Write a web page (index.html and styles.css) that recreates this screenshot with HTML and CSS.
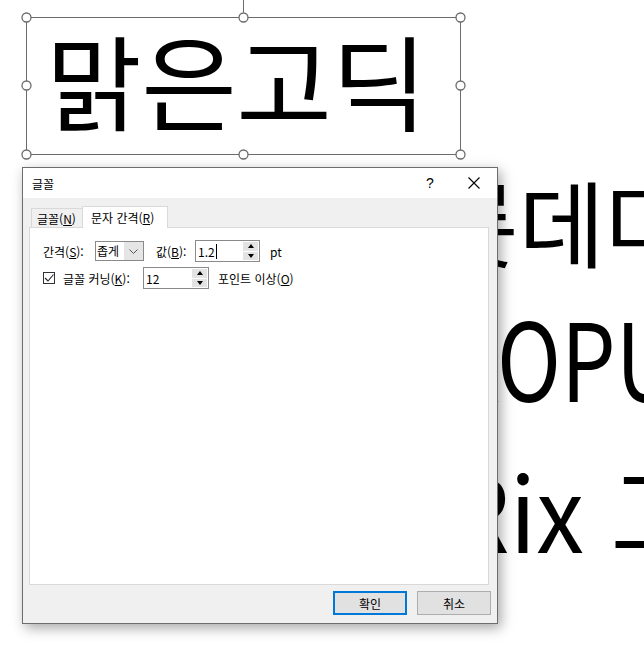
FILE: index.html
```html
<!DOCTYPE html>
<html lang="ko">
<head>
<meta charset="utf-8">
<link rel="stylesheet" href="styles.css">
</head>
<body>
<div class="stage">
  <svg class="selection" width="644" height="170" viewBox="0 0 644 170">
    <line x1="243.5" y1="0" x2="243.5" y2="12.5" stroke="#6b6b6b" stroke-width="1"/>
    <rect x="26.5" y="17.5" width="434" height="137" fill="none" stroke="#6b6b6b" stroke-width="1"/>
    <g fill="#fff" stroke="#6b6b6b" stroke-width="1.3">
      <circle cx="26.5" cy="17.5" r="4.5"/>
      <circle cx="243.5" cy="17.5" r="4.5"/>
      <circle cx="460.5" cy="17.5" r="4.5"/>
      <circle cx="26.5" cy="85.5" r="4.5"/>
      <circle cx="460.5" cy="85.5" r="4.5"/>
      <circle cx="26.5" cy="154.5" r="4.5"/>
      <circle cx="243.5" cy="154.5" r="4.5"/>
      <circle cx="460.5" cy="154.5" r="4.5"/>
    </g>
  </svg>
  <div class="slide-text t-main">맑은고딕</div>
  <div class="slide-text t1">롯데마트</div>
  <div class="slide-text t2">KOPUB</div>
  <div class="slide-text t3">Rix 고딕</div>

  <div class="dialog">
    <div class="titlebar">
      <span class="title">글꼴</span>
      <span class="help">?</span>
      <span class="close">
        <svg width="12" height="12" viewBox="0 0 12 12"><path d="M0.5 0.5 L11.5 11.5 M11.5 0.5 L0.5 11.5" stroke="#000" stroke-width="1.1" fill="none"/></svg>
      </span>
    </div>
    <div class="body">
      <div class="tabs">
        <div class="tab">글꼴(<u>N</u>)</div>
        <div class="tab active">문자 간격(<u>R</u>)</div>
      </div>
      <div class="panel">
        <div class="row">
          <span class="lbl lbl-s">간격(<u>S</u>):</span>
          <div class="combo">
            <span class="combo-text">좁게</span>
            <span class="combo-btn">
              <svg width="9" height="5" viewBox="0 0 9 5"><path d="M0.5 0.5 L4.5 4.5 L8.5 0.5" stroke="#555" stroke-width="1" fill="none"/></svg>
            </span>
          </div>
          <span class="lbl lbl-b">값(<u>B</u>):</span>
          <div class="spin spin-b">
            <span class="spin-val">1.2<span class="caret"></span></span>
            <span class="spin-btns"><span class="sb"><i class="tri-up"></i></span><span class="sb"><i class="tri-down"></i></span></span>
          </div>
          <span class="unit">pt</span>
        </div>
        <div class="row row2">
          <span class="chk">
            <svg width="10" height="10" viewBox="0 0 10 10"><path d="M1 5 L4 8 L9.5 1.5" stroke="#222" stroke-width="1.1" fill="none"/></svg>
          </span>
          <span class="lbl lbl-k">글꼴 커닝(<u>K</u>):</span>
          <div class="spin spin-k">
            <span class="spin-val">12</span>
            <span class="spin-btns"><span class="sb"><i class="tri-up"></i></span><span class="sb"><i class="tri-down"></i></span></span>
          </div>
          <span class="unit unit-o">포인트 이상(<u>O</u>)</span>
        </div>
      </div>
      <div class="buttons">
        <button class="btn btn-default">확인</button>
        <button class="btn">취소</button>
      </div>
    </div>
  </div>
</div>
</body>
</html>
```

FILE: styles.css
```css
html, body {
  margin: 0;
  padding: 0;
}
body {
  width: 644px;
  height: 649px;
  overflow: hidden;
  background: #fff;
  font-family: "Noto Sans CJK KR", "Noto Sans", sans-serif;
  color: #000;
}
.stage {
  position: relative;
  width: 644px;
  height: 649px;
  overflow: hidden;
}
.selection {
  position: absolute;
  left: 0;
  top: 0;
}
.slide-text {
  position: absolute;
  white-space: nowrap;
  line-height: 1;
  color: #000;
}
.t-main {
  left: 46px;
  top: 27px;
  font-size: 104px;
  letter-spacing: -0.5px;
}
.t1 {
  left: 432px;
  top: 173px;
  font-size: 94px;
}
.t2 {
  left: 443px;
  top: 301px;
  font-size: 108px;
  transform: scaleX(0.8);
  transform-origin: left top;
}
.t3 {
  left: 449px;
  top: 457px;
  font-size: 103px;
  transform: scaleX(0.93);
  transform-origin: left top;
}

/* dialog window */
.dialog {
  position: absolute;
  left: 22px;
  top: 167px;
  width: 474px;
  height: 455px;
  border: 1px solid #6d6d6d;
  background: #f0f0f0;
  box-shadow: 3px 4px 12px rgba(0, 0, 0, 0.35);
  display: flex;
  flex-direction: column;
  font-size: 12px;
}
.titlebar {
  height: 30px;
  background: #fff;
  display: flex;
  align-items: center;
  padding-left: 9px;
}
.title {
  flex: 1;
}
.help {
  width: 30px;
  text-align: center;
  font-size: 14px;
  font-family: "Liberation Sans", sans-serif;
  padding-right: 4px;
}
.close {
  width: 46px;
  margin-left: 2px;
  display: flex;
  justify-content: center;
  align-items: center;
}
.body {
  flex: 1;
  display: flex;
  flex-direction: column;
  padding: 8px 6px 8px 6px;
}
.tabs {
  height: 21px;
  display: flex;
  align-items: flex-end;
  margin-left: 2px;
  position: relative;
  z-index: 1;
}
.tab {
  box-sizing: border-box;
  height: 19px;
  width: 52px;
  border: 1px solid #d9d9d9;
  border-bottom: none;
  padding: 1px 0 0 5px;
  display: flex;
  align-items: center;
  background: #f0f0f0;
}
.tab.active {
  height: 22px;
  width: 86px;
  margin-left: -1px;
  margin-bottom: -1px;
  padding: 0 0 1px 8px;
  background: #fff;
}
.panel {
  box-sizing: border-box;
  height: 358px;
  margin-right: 2px;
  background: #fff;
  border: 1px solid #d9d9d9;
  padding: 12px 13px;
}
.row {
  display: flex;
  align-items: center;
  height: 22px;
}
.row2 {
  margin-top: 5px;
}
.lbl-s {
  width: 52px;
}
.combo {
  box-sizing: border-box;
  width: 49px;
  height: 20px;
  border: 1px solid #8a8a8a;
  display: flex;
}
.combo-text {
  flex: 1;
  background: #fff;
  padding-left: 1px;
  line-height: 18px;
}
.combo-btn {
  width: 19px;
  background: #e5e5e5;
  display: flex;
  align-items: center;
  justify-content: center;
}
.lbl-b {
  margin-left: 12px;
  width: 39px;
}
.spin {
  box-sizing: border-box;
  height: 22px;
  border: 1px solid #8a8a8a;
  background: #fff;
  display: flex;
  align-items: center;
}
.spin-b {
  width: 65px;
}
.spin-k {
  width: 66px;
}
.spin-val {
  flex: 1;
  padding-left: 2px;
  display: flex;
  align-items: center;
}
.caret {
  display: inline-block;
  width: 1px;
  height: 15px;
  background: #000;
  margin-left: 1px;
}
.spin-btns {
  width: 15px;
  height: 18px;
  margin-right: 1px;
  display: flex;
  flex-direction: column;
  gap: 1px;
}
.sb {
  flex: 1;
  background: #e3e3e3;
  display: flex;
  align-items: center;
  justify-content: center;
}
.tri-up {
  width: 0;
  height: 0;
  border-left: 3.5px solid transparent;
  border-right: 3.5px solid transparent;
  border-bottom: 4px solid #000;
}
.tri-down {
  width: 0;
  height: 0;
  border-left: 3.5px solid transparent;
  border-right: 3.5px solid transparent;
  border-top: 4px solid #000;
}
.unit {
  margin-left: 10px;
}
.chk {
  box-sizing: border-box;
  width: 12px;
  height: 12px;
  border: 1px solid #333;
  display: flex;
  align-items: center;
  justify-content: center;
}
.lbl-k {
  margin-left: 8px;
  width: 80px;
}
.unit-o {
  margin-left: 9px;
}
.buttons {
  margin-top: 6px;
  display: flex;
  justify-content: flex-end;
  gap: 10px;
}
.btn {
  box-sizing: border-box;
  width: 74px;
  height: 24px;
  padding: 0;
  background: #e1e1e1;
  border: 1px solid #adadad;
  font-family: inherit;
  font-size: 12px;
  color: #000;
}
.btn-default {
  border: 2px solid #0078d7;
}
```
